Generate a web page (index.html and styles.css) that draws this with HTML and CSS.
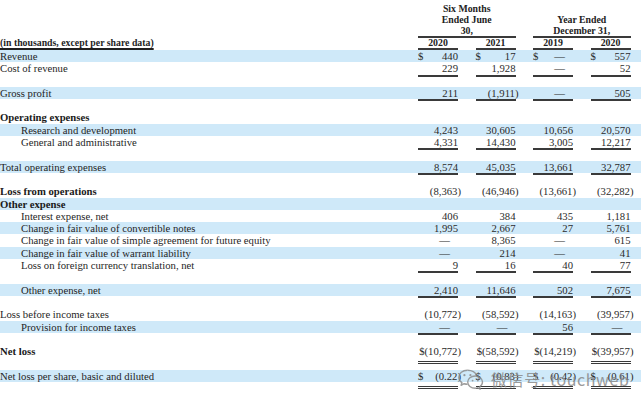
FILE: index.html
```html
<!DOCTYPE html>
<html>
<head>
<meta charset="utf-8">
<link rel="stylesheet" href="styles.css">
</head>
<body>
<div class="page">
  <div class="hdr">
    <div></div>
    <div class="grp g1">Six Months<br>Ended June<br>30,</div>
    <div class="grp g2">Year Ended<br>December 31,</div>
  </div>
  <div class="row yrs">
    <div class="lbl"><span class="ul">(in thousands, except per share data)</span></div>
    <div class="yr">2020</div><div class="yr">2021</div><div class="yr">2019</div><div class="yr">2020</div>
  </div>

  <div class="row band">
    <div class="lbl">Revenue</div>
    <div class="v"><span class="d">$</span>440</div>
    <div class="v"><span class="d">$</span>17</div>
    <div class="v"><span class="d">$</span><span class="dash">—</span></div>
    <div class="v"><span class="d">$</span>557</div>
  </div>
  <div class="row">
    <div class="lbl">Cost of revenue</div>
    <div class="v u">229</div><div class="v u">1,928</div><div class="v u"><span class="dash">—</span></div><div class="v u">52</div>
  </div>
  <div class="row"></div>
  <div class="row band">
    <div class="lbl">Gross profit</div>
    <div class="v u">211</div><div class="v u"><span class="n">(1,911)</span></div><div class="v u"><span class="dash">—</span></div><div class="v u">505</div>
  </div>
  <div class="row"></div>
  <div class="row">
    <div class="lbl b">Operating expenses</div>
  </div>
  <div class="row band">
    <div class="lbl ind">Research and development</div>
    <div class="v">4,243</div><div class="v">30,605</div><div class="v">10,656</div><div class="v">20,570</div>
  </div>
  <div class="row">
    <div class="lbl ind">General and administrative</div>
    <div class="v u">4,331</div><div class="v u">14,430</div><div class="v u">3,005</div><div class="v u">12,217</div>
  </div>
  <div class="row"></div>
  <div class="row band">
    <div class="lbl">Total operating expenses</div>
    <div class="v u">8,574</div><div class="v u">45,035</div><div class="v u">13,661</div><div class="v u">32,787</div>
  </div>
  <div class="row"></div>
  <div class="row">
    <div class="lbl b">Loss from operations</div>
    <div class="v"><span class="n">(8,363)</span></div><div class="v"><span class="n">(46,946)</span></div><div class="v"><span class="n">(13,661)</span></div><div class="v"><span class="n">(32,282)</span></div>
  </div>
  <div class="row band">
    <div class="lbl b">Other expense</div>
  </div>
  <div class="row">
    <div class="lbl ind">Interest expense, net</div>
    <div class="v">406</div><div class="v">384</div><div class="v">435</div><div class="v">1,181</div>
  </div>
  <div class="row band">
    <div class="lbl ind">Change in fair value of convertible notes</div>
    <div class="v">1,995</div><div class="v">2,667</div><div class="v">27</div><div class="v">5,761</div>
  </div>
  <div class="row">
    <div class="lbl ind">Change in fair value of simple agreement for future equity</div>
    <div class="v"><span class="dash">—</span></div><div class="v">8,365</div><div class="v"><span class="dash">—</span></div><div class="v">615</div>
  </div>
  <div class="row band">
    <div class="lbl ind">Change in fair value of warrant liability</div>
    <div class="v"><span class="dash">—</span></div><div class="v">214</div><div class="v"><span class="dash">—</span></div><div class="v">41</div>
  </div>
  <div class="row">
    <div class="lbl ind">Loss on foreign currency translation, net</div>
    <div class="v u">9</div><div class="v u">16</div><div class="v u">40</div><div class="v u">77</div>
  </div>
  <div class="row"></div>
  <div class="row band">
    <div class="lbl ind">Other expense, net</div>
    <div class="v u">2,410</div><div class="v u">11,646</div><div class="v u">502</div><div class="v u">7,675</div>
  </div>
  <div class="row"></div>
  <div class="row">
    <div class="lbl">Loss before income taxes</div>
    <div class="v"><span class="n">(10,772)</span></div><div class="v"><span class="n">(58,592)</span></div><div class="v"><span class="n">(14,163)</span></div><div class="v"><span class="n">(39,957)</span></div>
  </div>
  <div class="row band">
    <div class="lbl ind">Provision for income taxes</div>
    <div class="v u"><span class="dash">—</span></div><div class="v u"><span class="dash">—</span></div><div class="v u">56</div><div class="v u"><span class="dash">—</span></div>
  </div>
  <div class="row"></div>
  <div class="row">
    <div class="lbl b">Net loss</div>
    <div class="v dbl"><span class="n">$(10,772)</span></div><div class="v dbl"><span class="n">$(58,592)</span></div><div class="v dbl"><span class="n">$(14,219)</span></div><div class="v dbl"><span class="n">$(39,957)</span></div>
  </div>
  <div class="row"></div>
  <div class="row band">
    <div class="lbl">Net loss per share, basic and diluted</div>
    <div class="v dbl"><span class="d">$</span><span class="n">(0.22)</span></div>
    <div class="v dbl"><span class="d">$</span><span class="n">(0.83)</span></div>
    <div class="v dbl"><span class="d">$</span><span class="n">(0.42)</span></div>
    <div class="v dbl"><span class="d">$</span><span class="n">(0.61)</span></div>
  </div>

  <div class="wm">
    <svg class="wm-icon" width="28" height="22" viewBox="0 0 28 22">
      <g fill="none" stroke="#8c8c8c" stroke-width="1.4" stroke-linejoin="round">
        <path d="M10.5 2.2C5.6 2.2 1.8 5.4 1.8 9.3c0 2.2 1.2 4.1 3.1 5.4l-0.8 2.6 3-1.6c1.1 0.3 2.2 0.5 3.4 0.5"/>
        <path d="M19.2 7.4c-0.6-3-4.2-5.2-8.7-5.2"/>
        <path d="M18.2 8c-4.2 0-7.5 2.7-7.5 6.1s3.3 6.1 7.5 6.1c0.9 0 1.8-0.1 2.6-0.4l2.4 1.3-0.6-2.1c1.7-1.1 2.9-2.9 2.9-4.9 0-3.4-3.3-6.1-7.3-6.1z"/>
      </g>
      <g fill="#8c8c8c">
        <circle cx="7.4" cy="7.2" r="1.1"/><circle cx="13.4" cy="7.2" r="1.1"/>
        <circle cx="15.6" cy="12.6" r="0.9"/><circle cx="20.8" cy="12.6" r="0.9"/>
      </g>
    </svg>
    <span class="wm-text">微信号: touchweb</span>
  </div>
</div>
</body>
</html>
```
FILE: styles.css
```css
html, body {
  margin: 0;
  padding: 0;
  background: #ffffff;
}
body {
  font-family: "Liberation Serif", "Times New Roman", serif;
  color: #262626;
}
.page {
  position: relative;
  width: 641px;
  height: 411px;
  overflow: hidden;
}
.hdr, .row {
  display: grid;
  grid-template-columns: 400.5px 40px 40px 40px 40px;
  column-gap: 17.5px;
}
.hdr {
  height: 38px;
  align-items: end;
  font-weight: bold;
  font-size: 9.8px;
  line-height: 11px;
  text-align: center;
  color: #222;
}
.grp {
  border-bottom: 2px solid #3a3a3a;
}
.g1 { grid-column: 2 / 4; }
.g2 { grid-column: 4 / 6; }
.row {
  height: 12.3px;
  font-size: 10.7px;
  line-height: 12.3px;
  white-space: nowrap;
}
.row.yrs {
  height: 12px;
  font-size: 9.8px;
  line-height: 10px;
  font-weight: bold;
  color: #222;
}
.yrs .yr {
  text-align: center;
  border-bottom: 2px solid #3a3a3a;
}
.ul {
  text-decoration: underline;
  text-decoration-thickness: 1.5px;
  text-underline-offset: 1.5px;
}
.band {
  background: #cfe9f9;
}
.lbl {
  padding-left: 0;
  color: #1f1f1f;
}
.lbl.ind {
  padding-left: 21px;
}
.lbl.b {
  font-weight: bold;
  color: #1a1a1a;
}
.v {
  display: flex;
  justify-content: flex-end;
  color: #2b2b2b;
}
.v .d {
  margin-right: auto;
}
.v .n {
  margin-right: -3px;
}
.v .dash {
  padding-right: 8px;
}
.v.u {
  box-sizing: border-box;
  border-bottom: 2px solid #3a3a3a;
  margin-bottom: -1px;
}
.v.dbl {
  position: relative;
}
.v.dbl::after {
  content: "";
  position: absolute;
  left: 0;
  right: 0;
  top: calc(100% + 4px);
  height: 1px;
  border-top: 1.6px solid #3a3a3a;
  border-bottom: 1.6px solid #3a3a3a;
}
.wm {
  position: absolute;
  left: 457px;
  top: 368px;
  display: flex;
  align-items: center;
  gap: 6px;
  opacity: 0.85;
}
.wm-text {
  font-family: "Noto Sans CJK SC", "Noto Sans", sans-serif;
  font-size: 16px;
  letter-spacing: 0.6px;
  color: #8a8a8a;
  line-height: 22px;
}
```
